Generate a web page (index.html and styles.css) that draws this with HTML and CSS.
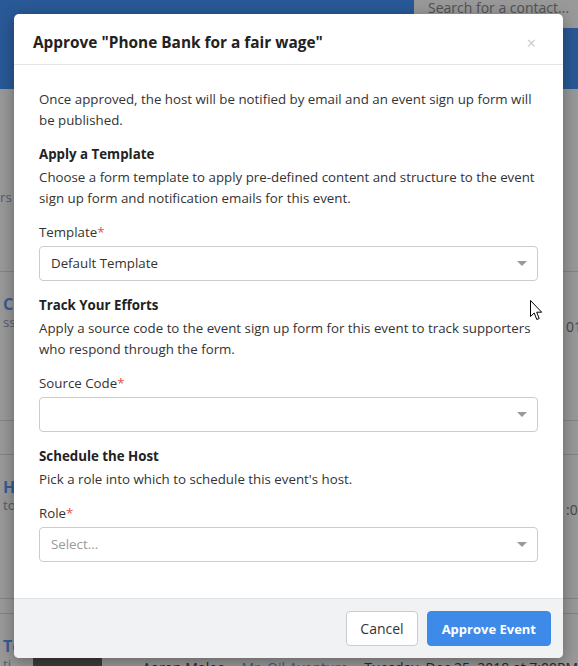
FILE: index.html
```html
<!DOCTYPE html>
<html lang="en">
<head>
  <meta charset="UTF-8">
  <title>Approve Event</title>
  <link rel="stylesheet" href="styles.css">
</head>
<body>

  <div class="page">
    <header class="topbar">
      <div class="search">Search for a contact...</div>
    </header>

    <div class="list">
      <div class="row row-first">
        <div class="name"><span class="muted">rs t</span></div>
      </div>
      <div class="row row-event">
        <div class="name">
          <div class="event-title">Cl</div>
          <div class="muted">ss</div>
        </div>
        <div class="date">01</div>
      </div>
      <div class="band"></div>
      <div class="row row-event row-mid">
        <div class="name">
          <div class="event-title">H</div>
          <div class="muted">to</div>
        </div>
        <div class="date">:0</div>
      </div>
      <div class="band band-thin"></div>
      <div class="row row-event row-last">
        <div class="name">
          <div class="event-title">To</div>
          <div class="muted">ti</div>
        </div>
      </div>
      <div class="row-detail">
        <span class="tag"></span>
        <span class="who">Aaron Maleo</span>
        <span class="where">Mr. Oil Aventure</span>
        <span class="when">Tuesday, Dec 25, 2018 at 7:00PM</span>
      </div>
    </div>
  </div>

  <div class="backdrop"></div>

  <div class="modal">
    <div class="modal-header">
      <h3 class="modal-title">Approve "Phone Bank for a fair wage"</h3>
      <span class="close">&times;</span>
    </div>

    <div class="modal-body">
      <p class="intro">Once approved, the host will be notified by email and an event sign up form will be published.</p>

      <h4 class="section">Apply a Template</h4>
      <p class="desc">Choose a form template to apply pre-defined content and structure to the event sign up form and notification emails for this event.</p>
      <label class="field-label">Template<span class="req">*</span></label>
      <div class="select">Default Template</div>

      <h4 class="section">Track Your Efforts</h4>
      <p class="desc">Apply a source code to the event sign up form for this event to track supporters who respond through the form.</p>
      <label class="field-label">Source Code<span class="req">*</span></label>
      <div class="select"></div>

      <h4 class="section">Schedule the Host</h4>
      <p class="desc">Pick a role into which to schedule this event's host.</p>
      <label class="field-label">Role<span class="req">*</span></label>
      <div class="select select-last placeholder">Select...</div>
    </div>

    <div class="modal-footer">
      <button class="btn btn-default">Cancel</button>
      <button class="btn btn-primary">Approve Event</button>
    </div>
  </div>

  <svg class="cursor" width="13" height="21" viewBox="0 0 13 21">
    <path d="M0.5 0.5 L0.5 16.5 L4.2 13 L6.8 19.5 L9.2 18.5 L6.7 12.2 L11.7 12.2 Z" fill="#fff" stroke="#000" stroke-width="1" stroke-linejoin="round"/>
  </svg>

</body>
</html>
```

FILE: styles.css
```css
:root {
  --text-color: #333;
  --heading-color: #222;
  --border-color: #ccc;
  --primary: #3d8ae8;
  --required: #e0533f;
}

html, body {
  margin: 0;
  padding: 0;
}

body {
  font-family: 'Open Sans', 'Noto Sans', sans-serif;
  font-size: 13.3px;
  line-height: 21px;
  color: var(--text-color);
  width: 578px;
  height: 666px;
  overflow: hidden;
  position: relative;
  background: #fff;
}

/* page behind the dialog */

.page {
  width: 578px;
}

.topbar {
  height: 89px;
  background: #4595fa;
  display: flex;
  justify-content: flex-end;
  align-items: flex-start;
}

.search {
  width: 150px;
  height: 30px;
  padding: 0 0 0 14px;
  background: #fff;
  color: #8a8a8a;
  font-size: 14px;
  line-height: 20px;
  margin-top: -2px;
}

.list {
  background: #fff;
}

.row {
  display: flex;
  border-bottom: 1px solid #ddd;
  padding-left: 3px;
}

.row-first {
  height: 182px;
  padding-left: 0;
}

.row-first .name {
  padding-top: 98px;
}

.row-event {
  height: 148px;
}

.row-mid {
  height: 143px;
}

.row-last {
  border-bottom: none;
  height: 44px;
}

.name {
  width: 563px;
  padding-top: 22px;
  flex-shrink: 0;
}

.event-title {
  color: #5b9cf5;
  font-weight: bold;
  font-size: 16px;
  line-height: 20px;
}

.muted {
  color: #8a9bb5;
  line-height: 16px;
}

.date {
  color: #777;
  padding-top: 44px;
  white-space: nowrap;
  font-size: 14px;
}

.band {
  height: 33px;
  border-bottom: 1px solid #ddd;
}

.band-thin {
  height: 14px;
}

.row-detail {
  display: flex;
  align-items: flex-start;
  height: 20px;
  white-space: nowrap;
  font-size: 14px;
  line-height: 20px;
  color: #444;
}

.tag {
  width: 72px;
  height: 20px;
  background: #666;
  margin: 0 40px 0 33px;
}

.who {
  margin-right: 16px;
}

.where {
  color: #5b9cf5;
  margin-right: 16px;
}

.backdrop {
  position: absolute;
  inset: 0;
  background: rgba(0, 0, 0, 0.4);
}

/* dialog */

.modal {
  position: absolute;
  left: 14px;
  top: 14px;
  width: 549px;
  background: #fff;
  border-radius: 5px;
  box-shadow: 0 4px 16px rgba(0, 0, 0, 0.35);
  overflow: hidden;
}

.modal-header {
  display: flex;
  align-items: center;
  justify-content: space-between;
  padding: 18px 27px 10px 19px;
  border-bottom: 1px solid #e5e5e5;
}

.modal-title {
  margin: 0;
  font-size: 15.4px;
  line-height: 22px;
  font-weight: bold;
  color: var(--heading-color);
}

.close {
  color: #c8c8c8;
  font-size: 16px;
  line-height: 22px;
}

.modal-body {
  padding: 24px 25px 36px 25px;
}

.intro {
  margin: 0 0 13px;
}

.section {
  margin: 0 0 2px;
  font-size: 13.3px;
  line-height: 21px;
  font-weight: bold;
  color: var(--heading-color);
}

.desc {
  margin: 0 0 13px;
}

.field-label {
  display: block;
  margin-bottom: 3px;
}

.req {
  color: var(--required);
}

.select {
  position: relative;
  height: 33px;
  line-height: 33px;
  padding: 0 11px;
  border: 1px solid var(--border-color);
  border-radius: 4px;
  margin-bottom: 14px;
}

.select::after {
  content: "";
  position: absolute;
  right: 10px;
  top: 14px;
  border-top: 5px solid #999;
  border-left: 5px solid transparent;
  border-right: 5px solid transparent;
}

.select-last {
  margin-bottom: 0;
}

.placeholder {
  color: #999;
}

.modal-footer {
  display: flex;
  justify-content: flex-end;
  gap: 9px;
  padding: 12px;
  background: #f1f2f4;
  border-top: 1px solid #e3e3e3;
}

.btn {
  height: 35px;
  padding: 0 14px;
  border-radius: 4px;
  font-family: inherit;
  font-size: 14px;
  cursor: pointer;
}

.btn-default {
  padding: 0 13px;
  background: #fff;
  border: 1px solid var(--border-color);
  color: var(--text-color);
}

.btn-primary {
  background: var(--primary);
  border: 1px solid var(--primary);
  color: #fff;
  font-size: 13px;
  font-weight: bold;
}

.cursor {
  position: absolute;
  left: 530px;
  top: 300px;
}
```
